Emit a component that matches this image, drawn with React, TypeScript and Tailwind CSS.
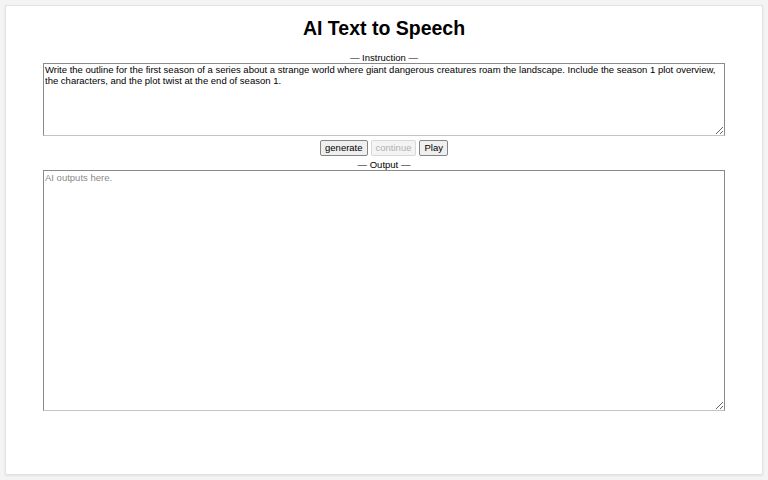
import React, { useState } from 'react';

const PROMPT =
    'Write the outline for the first season of a series about a strange world where giant dangerous creatures roam the landscape. Include the season 1 plot overview, the characters, and the plot twist at the end of season 1.';

const App: React.FC = () => {
    const [instruction, setInstruction] = useState(PROMPT);
    const [output, setOutput] = useState('');

    return (
        <div className="min-h-[480px] bg-[#f4f4f4] p-[5px] font-['Liberation_Sans',Arial,sans-serif] text-black">
            <div className="flex h-[470px] flex-col items-center border border-[#e2e2e2] bg-white shadow-[0_1px_2px_rgba(0,0,0,0.08)]">
                <h1 className="mt-[10px] text-[19.5px] font-bold leading-[24px]">AI Text to Speech</h1>

                <p className="mt-[12px] text-[9.5px] leading-[11px]">— Instruction —</p>
                <textarea
                    value={instruction}
                    onChange={(e) => setInstruction(e.target.value)}
                    className="h-[73px] w-[682px] resize-y border border-[#8a8a8a] border-b-[#c4c4c4] px-[1px] py-0 text-[9.5px] leading-[11px] outline-none"
                />

                <div className="mt-[4px] flex gap-[3px]">
                    <button className="h-[16px] rounded-[2px] border border-[#858585] bg-[#efefef] px-[4px] text-[9.5px] leading-[14px]">
                        generate
                    </button>
                    <button
                        disabled
                        className="h-[16px] rounded-[2px] border border-[#d8d8d8] bg-[#f4f4f4] px-[4px] text-[9.5px] leading-[14px] text-[#b0b0b0]"
                    >
                        continue
                    </button>
                    <button className="h-[16px] rounded-[2px] border border-[#858585] bg-[#efefef] px-[4px] text-[9.5px] leading-[14px]">
                        Play
                    </button>
                </div>

                <p className="mt-[3px] text-[9.5px] leading-[11px]">— Output —</p>
                <textarea
                    value={output}
                    onChange={(e) => setOutput(e.target.value)}
                    placeholder="AI outputs here."
                    className="h-[241px] w-[682px] resize-y border border-[#8a8a8a] border-b-[#c4c4c4] px-[1px] py-0 text-[9.5px] leading-[13px] outline-none placeholder:text-[#8a8a8a]"
                />
            </div>
        </div>
    );
};

export default App;
